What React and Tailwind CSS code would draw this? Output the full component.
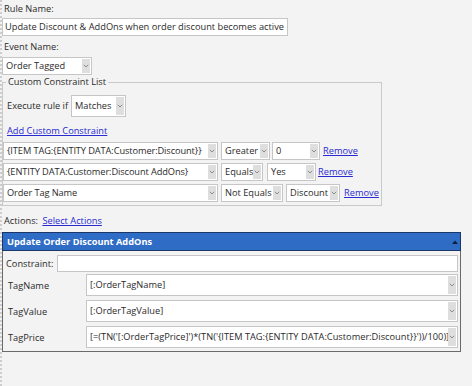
import React from "react";

function Chevron() {
  return (
    <svg width="6" height="4" viewBox="0 0 6 4" className="block">
      <path d="M0.8 0.8 L3 3 L5.2 0.8" fill="none" stroke="#8c8c8c" strokeWidth="1" />
    </svg>
  );
}

function Select({ text, className = "" }) {
  return (
    <div className={`flex items-stretch border border-[#c6c6c6] bg-white ${className}`}>
      <div className="flex-1 min-w-0 pl-[3px] flex items-center whitespace-nowrap overflow-hidden">{text}</div>
      <div className="w-[8px] my-[1px] mr-[1px] bg-[#dedede] flex items-center justify-center">
        <Chevron />
      </div>
    </div>
  );
}

function Link({ children, className = "" }) {
  return <span className={`text-[#2a2ad2] underline ${className}`}>{children}</span>;
}

function ConstraintRow({ a, b, bw, c, cw, cgap, rgap }) {
  return (
    <div className="flex items-center h-[18px]">
      <Select text={a} className="w-[215px] h-[18px] tracking-[-0.1px]" />
      <Select text={b} className={`${bw} h-[18px] ml-[3px]`} />
      <Select text={c} className={`${cw} h-[18px] ${cgap}`} />
      <Link className={rgap}>Remove</Link>
    </div>
  );
}

function PanelRow({ label, value }) {
  return (
    <div className="flex items-center h-[22px]">
      <div className="w-[80px] pl-[2px] pt-[2px]">{label}</div>
      <Select text={value} className="flex-1 min-w-0 h-[22px] mr-[2px]" />
    </div>
  );
}

export default function App() {
  return (
    <div className="w-[474px] h-[386px] bg-white">
      <div className="w-[472px] h-[386px] bg-[#f3f3f3] border-l-2 border-dotted border-[#cdcdcd] font-['Open_Sans',sans-serif] text-[9.25px] text-[#2b2b2b] overflow-hidden">
        <div className="h-[17px] leading-[17px] pl-[2px]">Rule Name:</div>
        <div className="mt-[1px] w-[286px] h-[18px] border border-[#c6c6c6] bg-white pl-[2px] leading-[16px] whitespace-nowrap overflow-hidden">
          Update Discount &amp; AddOns when order discount becomes active
        </div>
        <div className="mt-[3px] h-[16px] leading-[16px] pl-[2px]">Event Name:</div>
        <div className="mt-[2px] flex">
          <Select text="Order Tagged" className="w-[90px] h-[18px]" />
        </div>
        <fieldset className="w-[380px] border border-[#c9c9c9] pb-[3px]">
          <legend className="ml-[3px] px-[2px] leading-[14px]">Custom Constraint List</legend>
          <div className="mt-[6px] flex items-center h-[22px] pl-[4px]">
            <span className="w-[64px] whitespace-nowrap">Execute rule if</span>
            <Select text="Matches" className="w-[55px] h-[22px]" />
          </div>
          <div className="mt-[6px] h-[16px] leading-[16px] pl-[4px]">
            <Link>Add Custom Constraint</Link>
          </div>
          <div className="mt-[3px] flex flex-col gap-[3px]">
            <ConstraintRow
              a="{ITEM TAG:{ENTITY DATA:Customer:Discount}}"
              b="Greater"
              bw="w-[49px]"
              c="0"
              cw="w-[48px]"
              cgap="ml-[2px]"
              rgap="ml-[3px]"
            />
            <ConstraintRow
              a="{ENTITY DATA:Customer:Discount AddOns}"
              b="Equals"
              bw="w-[42px]"
              c="Yes"
              cw="w-[49px]"
              cgap="ml-[4px]"
              rgap="ml-[2px]"
            />
            <ConstraintRow
              a="Order Tag Name"
              b="Not Equals"
              bw="w-[62px]"
              c="Discount"
              cw="w-[54px]"
              cgap="ml-[3px]"
              rgap="ml-[4px]"
            />
          </div>
        </fieldset>
        <div className="mt-[7px] h-[16px] leading-[16px] pl-[2px]">
          Actions: <Link className="ml-[2px]">Select Actions</Link>
        </div>
        <div className="mt-[3px] w-[459px] flex flex-col">
          <div className="h-[19px] bg-[#2f6cc6] border border-[#1b3668] flex items-center justify-between pl-[4px] pr-[2px]">
            <span className="text-white font-bold text-[9.25px]">Update Order Discount AddOns</span>
            <svg width="6" height="4" viewBox="0 0 6 4">
              <path d="M0 4 L3 0.5 L6 4 Z" fill="#0d1f3d" />
            </svg>
          </div>
          <div className="border-x border-b border-[#6a6a6a] pl-[3px] pb-[3px]">
            <div className="mt-[4px] flex items-center h-[17px]">
              <span className="w-[51px] pt-[1px]">Constraint:</span>
              <div className="flex-1 h-[17px] mr-[2px] border border-[#c6c6c6] bg-white" />
            </div>
            <div className="mt-[2px] flex flex-col gap-[4px]">
              <PanelRow label="TagName" value="[:OrderTagName]" />
              <PanelRow label="TagValue" value="[:OrderTagValue]" />
              <PanelRow
                label="TagPrice"
                value="[=(TN('[:OrderTagPrice]')*(TN('{ITEM TAG:{ENTITY DATA:Customer:Discount}}'))/100)]"
              />
            </div>
          </div>
        </div>
      </div>
    </div>
  );
}
